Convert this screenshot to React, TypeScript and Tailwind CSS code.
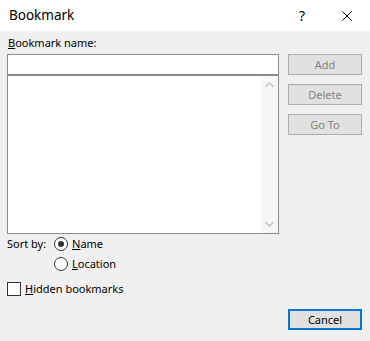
import React from "react";

const font = { fontFamily: '"Noto Sans", "Open Sans", sans-serif' };

function DialogButton({ label, primary = false, disabled = false }: { label: string; primary?: boolean; disabled?: boolean }) {
  return (
    <button
      className={
        "h-[21px] w-[74px] text-[11px] leading-none bg-[#e1e1e1] " +
        (primary ? "border-2 border-[#0078d7] text-black" : "border border-[#adadad]") +
        (disabled ? " text-[#838383]" : "")
      }
    >
      {label}
    </button>
  );
}

function Radio({ checked, children }: { checked?: boolean; children: React.ReactNode }) {
  return (
    <label className="flex h-[20px] items-center gap-[4px]">
      <span className="flex h-[14px] w-[14px] items-center justify-center rounded-full border border-[#333333] bg-white">
        {checked && <span className="h-[6px] w-[6px] rounded-full bg-[#333333]" />}
      </span>
      <span>{children}</span>
    </label>
  );
}

export default function App() {
  return (
    <div className="flex h-[341px] w-[370px] flex-col bg-[#f0f0f0] text-[11px] text-black" style={font}>
      {/* Title bar */}
      <div className="flex h-[31px] shrink-0 items-center bg-white pl-[9px]">
        <span className="text-[13.5px]">Bookmark</span>
        <span className="ml-auto mr-[37px] text-[14px]">?</span>
        <svg width="10" height="10" viewBox="0 0 10 10" className="mr-[18px]">
          <path d="M0.5 0.5 L9.5 9.5 M9.5 0.5 L0.5 9.5" stroke="#000" strokeWidth="1" />
        </svg>
      </div>

      {/* Body */}
      <div className="flex pl-[7px] pt-[4px]">
        <div className="flex w-[272px] flex-col">
          <div className="h-[16px] pl-[1px] leading-[16px]">
            <span className="underline">B</span>ookmark name:
          </div>
          <div className="mt-[3px] h-[21px] border border-[#8c8c8c] bg-white" />
          <div className="flex h-[159px] border border-[#8c8c8c] bg-white">
            <div className="flex-1" />
            <div className="flex w-[17px] flex-col items-center justify-between bg-[#f7f7f7] py-[6px]">
              <svg width="9" height="6" viewBox="0 0 9 6">
                <path d="M0.5 5 L4.5 1 L8.5 5" stroke="#c2c2c2" strokeWidth="1.3" fill="none" />
              </svg>
              <svg width="9" height="6" viewBox="0 0 9 6">
                <path d="M0.5 1 L4.5 5 L8.5 1" stroke="#c2c2c2" strokeWidth="1.3" fill="none" />
              </svg>
            </div>
          </div>
          <div className="flex">
            <div className="flex h-[20px] w-[47px] items-center">Sort by:</div>
            <div className="flex flex-col">
              <Radio checked>
                <span className="underline">N</span>ame
              </Radio>
              <Radio>
                <span className="underline">L</span>ocation
              </Radio>
            </div>
          </div>
          <label className="mt-[5px] flex h-[20px] items-center gap-[4px]">
            <span className="h-[14px] w-[14px] border border-[#333333] bg-white" />
            <span>
              <span className="underline">H</span>idden bookmarks
            </span>
          </label>
        </div>

        <div className="ml-[9px] flex flex-col gap-[9px] pt-[19px]">
          <DialogButton label="Add" disabled />
          <DialogButton label="Delete" disabled />
          <DialogButton label="Go To" disabled />
        </div>
      </div>

      <div className="mt-[10px] flex justify-end pr-[8px]">
        <DialogButton label="Cancel" primary />
      </div>
    </div>
  );
}
